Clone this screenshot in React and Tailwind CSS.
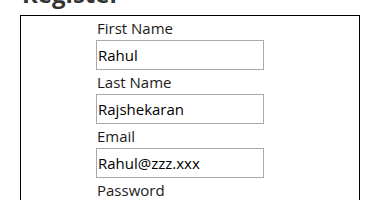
export default function App() {
  const fields = [
    { label: "First Name", value: "Rahul" },
    { label: "Last Name", value: "Rajshekaran" },
    { label: "Email", value: "Rahul@zzz.xxx" },
    { label: "Password", value: "" },
  ];

  return (
    <div className="h-[200px] w-[381px] overflow-hidden bg-white pl-[20px] font-['Open_Sans',sans-serif] text-[#1b1b1b]">
      <h1 className="ml-[2px] mt-[-22px] mb-[5px] h-[32px] text-[24px] font-bold leading-[32px] text-[#333]">
        Register
      </h1>
      <div className="w-[340px] border border-black pl-[75px]">
        {fields.map((f) => (
          <div key={f.label} className="flex flex-col">
            <label className="h-[24px] pl-[1px] text-[15px] leading-[24px]">{f.label}</label>
            <input
              type="text"
              defaultValue={f.value}
              className="h-[30px] w-[168px] border border-[#a9a9a9] px-[1px] text-[15px] text-black outline-none"
            />
          </div>
        ))}
      </div>
    </div>
  );
}
